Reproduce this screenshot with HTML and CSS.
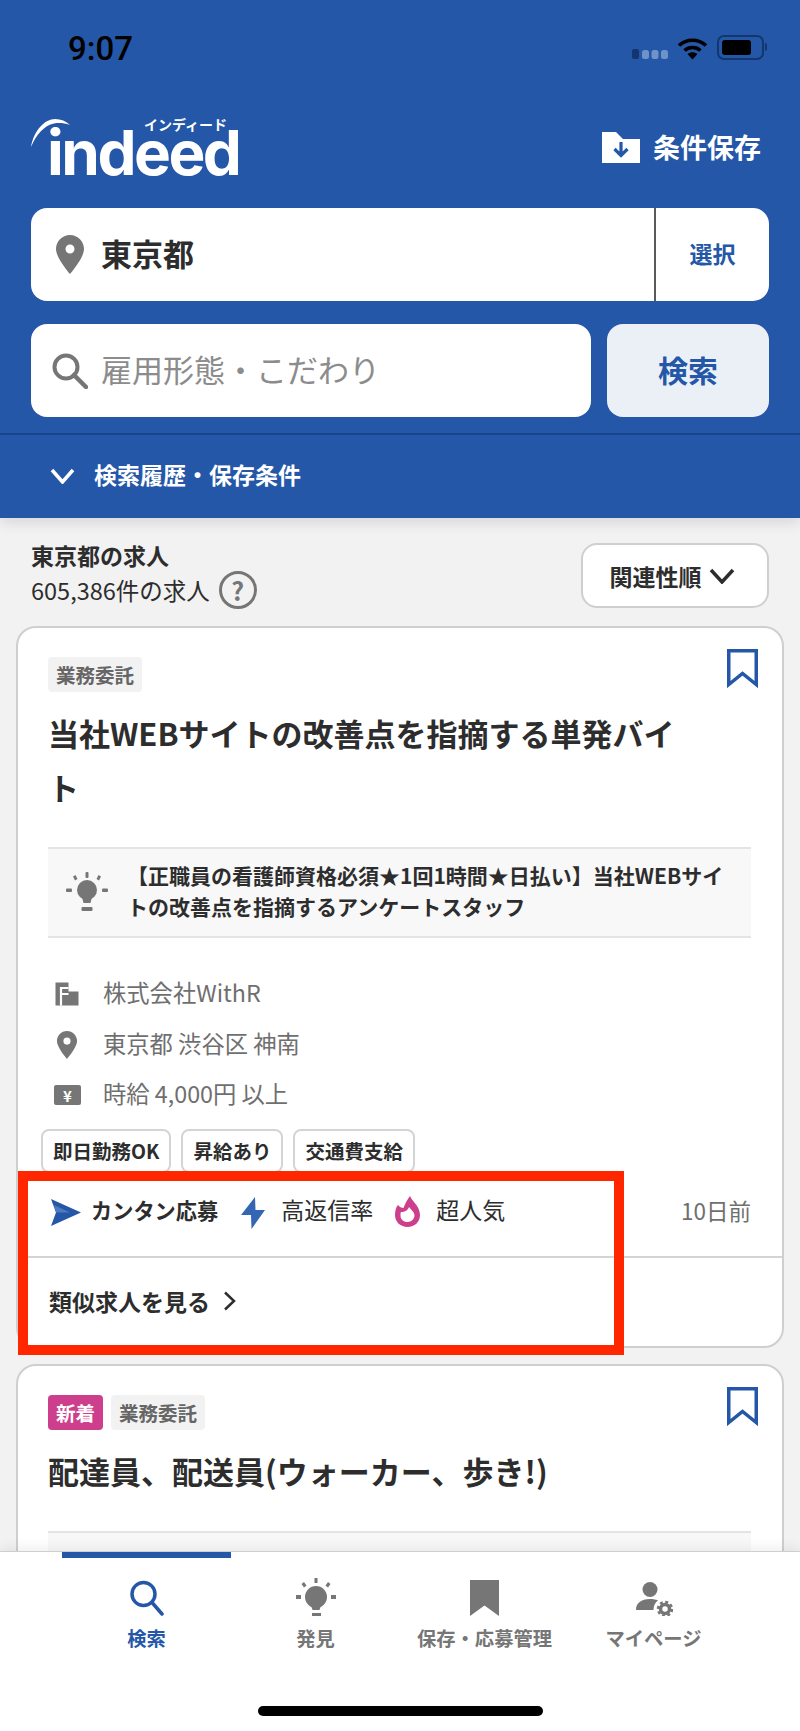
FILE: index.html
```html
<!DOCTYPE html>
<html lang="ja">
<head>
    <meta charset="UTF-8">
    <meta name="viewport" content="width=device-width, initial-scale=1.0">
    <title>Indeed 求人検索</title>
    <link rel="stylesheet" href="styles.css">
</head>
<body>
    <div class="app">
        <header class="top">
            <div class="status-bar">
                <span class="clock">9:07</span>
                <div class="status-icons">
                    <svg class="signal" width="36" height="10" viewBox="0 0 36 10">
                        <rect x="0" y="0" width="7" height="10" rx="2" fill="#14366e"/>
                        <rect x="10" y="1" width="7" height="9" rx="2.5" fill="#6f93c7"/>
                        <rect x="19.500" y="1" width="7" height="9" rx="2.500" fill="#6f93c7"/>
                        <rect x="29" y="1" width="7" height="9" rx="2.500" fill="#6f93c7"/>
                    </svg>
                    <svg class="wifi" width="31" height="24" viewBox="0 0 31 24">
                        <path d="M2 9.500C9.500 2.500 21.500 2.500 29 9.500" fill="none" stroke="#000" stroke-width="3.600"/>
                        <path d="M7.500 14.500C12 10.500 19 10.500 23.500 14.500" fill="none" stroke="#000" stroke-width="3.600"/>
                        <path d="M10.500 18L15.500 23.500L20.500 18C17.500 15.500 13.500 15.500 10.500 18Z"/>
                    </svg>
                    <div class="battery"><div class="battery-fill"></div></div>
                    <div class="battery-tip"></div>
                </div>
            </div>

            <div class="brand-row">
                <div class="logo">
                    <svg class="logo-arc" width="40" height="32" viewBox="0 0 40 32">
                        <path d="M0 31C3 14 14 3 24 3C30 3 35 5 39 9C33 7 28 6.500 23 7.500C13 9.500 5 19 0 31Z" fill="#fff"/>
                    </svg>
                    <span class="logo-kana">インディード</span>
                    <span class="logo-word">indeed</span>
                </div>
                <div class="save-search">
                    <svg width="38" height="31" viewBox="0 0 38 31">
                        <path d="M0 0H14L21 7H38V31H0Z" fill="#fff"/>
                        <path d="M19 10V23M12.500 17L19 23.500L25.500 17" fill="none" stroke="#2457a7" stroke-width="3.200"/>
                    </svg>
                    <span>条件保存</span>
                </div>
            </div>

            <div class="location-box">
                <div class="location-main">
                    <svg width="28" height="39" viewBox="0 0 28 39">
                        <path fill-rule="evenodd" d="M14 0C6 0 0 6.500 0 14C0 23 14 39 14 39S28 23 28 14C28 6.500 22 0 14 0ZM14 9.500A4.500 4.500 0 1 1 14 18.500A4.500 4.500 0 1 1 14 9.500Z" fill="#767676"/>
                    </svg>
                    <span>東京都</span>
                </div>
                <div class="location-select">選択</div>
            </div>

            <div class="search-row">
                <div class="keyword-box">
                    <svg width="36" height="36" viewBox="0 0 36 36">
                        <circle cx="14" cy="14" r="11.500" fill="none" stroke="#767676" stroke-width="4"/>
                        <path d="M22 22L34 34" stroke="#767676" stroke-width="4.500" stroke-linecap="round"/>
                    </svg>
                    <span>雇用形態・こだわり</span>
                </div>
                <div class="search-btn">検索</div>
            </div>

            <div class="history-row">
                <svg width="25" height="16" viewBox="0 0 25 16">
                    <path d="M2 2L12.500 14L23 2" fill="none" stroke="#fff" stroke-width="3.500"/>
                </svg>
                <span>検索履歴・保存条件</span>
            </div>
        </header>

        <main class="results">
            <div class="results-head">
                <div class="results-info">
                    <div class="results-title">東京都の求人</div>
                    <div class="results-count">
                        <span>605,386件の求人</span>
                        <span class="help-icon">?</span>
                    </div>
                </div>
                <div class="sort-btn">
                    <span>関連性順</span>
                    <svg width="26" height="16" viewBox="0 0 26 16">
                        <path d="M2 2L13 14L24 2" fill="none" stroke="#2d2d2d" stroke-width="3.500"/>
                    </svg>
                </div>
            </div>

            <article class="job-card">
                <svg class="bookmark" width="31" height="39" viewBox="0 0 31 39">
                    <path d="M1.750 1.750H29.250V35.500L15.500 24.500L1.750 35.500Z" fill="none" stroke="#2457a7" stroke-width="3.500"/>
                </svg>
                <div class="job-main">
                    <div class="badges"><span class="badge">業務委託</span></div>
                    <h2 class="job-title">当社WEBサイトの改善点を指摘する単発バイト</h2>
                    <div class="snippet">
                        <svg width="42" height="42" viewBox="0 0 42 42">
                            <g fill="#767676">
                                <circle cx="21" cy="18" r="10"/>
                                <path d="M16 25H26L24.500 31H17.500Z"/>
                                <rect x="15.500" y="35" width="11" height="4" rx="1"/>
                                <rect x="19.500" y="0" width="3" height="6" rx="1"/>
                                <rect x="0" y="16.500" width="6" height="3.500" rx="1"/>
                                <rect x="36" y="16.500" width="6" height="3.500" rx="1"/>
                                <path d="M7 4.500L9.500 3L11.500 7L9 8.500Z"/>
                                <path d="M35 4.500L32.500 3L30.500 7L33 8.500Z"/>
                            </g>
                        </svg>
                        <p>【正職員の看護師資格必須★1回1時間★日払い】当社WEBサイトの改善点を指摘するアンケートスタッフ</p>
                    </div>
                    <ul class="meta-list">
                        <li>
                            <svg width="26" height="26" viewBox="-1.500 -1.500 26 26">
                                <path d="M0 0H13V9H23V23H0Z" fill="#767676"/>
                                <path d="M5.500 23V5.500H13M5.500 11.500H13" fill="none" stroke="#fff" stroke-width="2.200"/>
                            </svg>
                            <span>株式会社WithR</span>
                        </li>
                        <li>
                            <svg width="26" height="28" viewBox="0 0 28 39">
                                <path fill-rule="evenodd" d="M14 0C6 0 0 6.500 0 14C0 23 14 39 14 39S28 23 28 14C28 6.500 22 0 14 0ZM14 9A5 5 0 1 1 14 19A5 5 0 1 1 14 9Z" fill="#767676"/>
                            </svg>
                            <span>東京都 渋谷区 神南</span>
                        </li>
                        <li>
                            <span class="yen-icon">¥</span>
                            <span>時給 4,000円 以上</span>
                        </li>
                    </ul>
                    <div class="tags">
                        <span class="tag">即日勤務OK</span>
                        <span class="tag">昇給あり</span>
                        <span class="tag">交通費支給</span>
                    </div>
                </div>
                <div class="job-perks">
                    <svg width="30" height="27" viewBox="0 0 30 27">
                        <path d="M0 0L30 13.500L0 27L5 13.500Z" fill="#2457a7"/>
                        <path d="M5 13.500L19 13.500L3 6Z" fill="#4f7bbd"/>
                    </svg>
                    <span class="perk-easy">カンタン応募</span>
                    <svg class="perk-icon" width="24" height="32" viewBox="0 0 24 32">
                        <path d="M14 0L0 18H10L10.500 32L24 13H14.500Z" fill="#3366b3"/>
                    </svg>
                    <span class="perk-text">高返信率</span>
                    <svg class="perk-icon perk-flame" width="25" height="31" viewBox="0 0 25 31">
                        <path fill-rule="evenodd" d="M15 0C16 4 25 10 25 19C25 26 19.500 31 12.500 31C5.500 31 0 26 0 19C0 15 1 11 3 9C4.500 11 6.500 12 8.500 12C10 8 12 4 15 0ZM14 11C13 14 10 16 6 16C5.500 17 5.500 18 5.500 19.500C5.500 23.500 8.500 26 12.500 26C16.500 26 19.500 23 19.500 19.500C19.500 16 16 14 14 11Z" fill="#cd3f8c"/>
                    </svg>
                    <span class="perk-text">超人気</span>
                    <span class="job-age">10日前</span>
                </div>
                <div class="job-foot">
                    <span>類似求人を見る</span>
                    <svg width="13" height="20" viewBox="0 0 13 20">
                        <path d="M2 1.500L11 10L2 18.500" fill="none" stroke="#2d2d2d" stroke-width="2.500"/>
                    </svg>
                </div>
            </article>

            <article class="job-card">
                <svg class="bookmark" width="31" height="39" viewBox="0 0 31 39">
                    <path d="M1.750 1.750H29.250V35.500L15.500 24.500L1.750 35.500Z" fill="none" stroke="#2457a7" stroke-width="3.500"/>
                </svg>
                <div class="job-main">
                    <div class="badges">
                        <span class="badge badge-new">新着</span>
                        <span class="badge">業務委託</span>
                    </div>
                    <h2 class="job-title">配達員、配送員(ウォーカー、歩き!)</h2>
                    <div class="snippet"></div>
                </div>
            </article>

            <!-- red marker drawn over the first card -->
            <div class="highlight"></div>
        </main>

        <nav class="tabbar">
            <div class="tabs">
                <div class="tab tab-active">
                    <div class="tab-icon">
                        <svg width="36" height="36" viewBox="0 0 36 36">
                            <circle cx="14.500" cy="14" r="11.500" fill="none" stroke="#2457a7" stroke-width="3.500"/>
                            <path d="M23 22.500L33 34" stroke="#2457a7" stroke-width="3.500" stroke-linecap="round"/>
                        </svg>
                    </div>
                    <span>検索</span>
                </div>
                <div class="tab">
                    <div class="tab-icon">
                        <svg width="40" height="40" viewBox="0 0 40 40">
                            <g fill="#767676">
                                <circle cx="20" cy="19" r="11"/>
                                <path d="M15 27H25L23.500 32H16.500Z"/>
                                <rect x="16" y="35" width="9" height="3"/>
                                <rect x="18.500" y="0" width="3" height="5"/>
                                <rect x="0" y="17" width="5" height="4"/>
                                <rect x="35" y="17" width="5" height="4"/>
                                <path d="M5.500 6L8 4L10.500 7.500L8 9.500Z"/>
                                <path d="M34.500 6L32 4L29.500 7.500L32 9.500Z"/>
                            </g>
                        </svg>
                    </div>
                    <span>発見</span>
                </div>
                <div class="tab">
                    <div class="tab-icon">
                        <svg width="29" height="36" viewBox="0 0 29 36">
                            <path d="M0 0H29V36L14.500 25.500L0 36Z" fill="#767676"/>
                        </svg>
                    </div>
                    <span>保存・応募管理</span>
                </div>
                <div class="tab">
                    <div class="tab-icon">
                        <svg width="38" height="36" viewBox="0 0 38 36">
                            <g fill="#767676">
                                <circle cx="15" cy="9.500" r="7.500"/>
                                <path d="M1 30C1 23 6 19 15 19C18 19 21 19.500 23 20.500C20 22.500 18.500 26 18.500 30Z"/>
                            </g>
                            <circle cx="30" cy="29" r="4.500" fill="none" stroke="#767676" stroke-width="3.500"/>
                            <circle cx="30" cy="29" r="7" fill="none" stroke="#767676" stroke-width="2.500" stroke-dasharray="3 2.500"/>
                        </svg>
                    </div>
                    <span>マイページ</span>
                </div>
            </div>
            <div class="home-bar"></div>
        </nav>
    </div>
</body>
</html>
```

FILE: styles.css
```css
/* Global styles */
* {
    box-sizing: border-box;
}

body {
    margin: 0;
    font-family: "Noto Sans CJK JP", "Noto Sans", sans-serif;
    color: #2d2d2d;
    background-color: #f2f2f2;
}

.app {
    width: 800px;
    height: 1731px;
    display: flex;
    flex-direction: column;
    overflow: hidden;
}

/* Blue header */
.top {
    height: 518px;
    flex-shrink: 0;
    background-color: #2457a7;
    position: relative;
    z-index: 2;
    box-shadow: 0 4px 14px rgba(0, 0, 0, 0.12);
}

.status-bar {
    height: 100px;
    padding: 31px 33px 0 68px;
    display: flex;
    justify-content: space-between;
    align-items: flex-start;
}

.clock {
    font-family: "Roboto", sans-serif;
    font-size: 33px;
    font-weight: 500;
    line-height: 36px;
    color: #000;
}

.status-icons {
    display: flex;
    align-items: flex-start;
    padding-top: 4px;
}

.signal {
    margin: 14px 9px 0 0;
}

.wifi {
    margin: 1px 9px 0 0;
}

.battery {
    width: 47px;
    height: 25px;
    padding: 3px;
    border: 2px solid #14366e;
    border-radius: 7px;
}

.battery-fill {
    width: 29px;
    height: 15px;
    background-color: #000;
    border-radius: 3px;
}

.battery-tip {
    width: 2px;
    height: 8px;
    margin: 8px 0 0 1px;
    background-color: #14366e;
    border-radius: 0 2px 2px 0;
}

.brand-row {
    height: 94px;
    margin-bottom: 14px;
    padding: 0 39px 0 31px;
    display: flex;
    justify-content: space-between;
    align-items: center;
}

.logo {
    position: relative;
    width: 210px;
    height: 62px;
}

.logo-arc {
    position: absolute;
    left: 0;
    top: 0;
}

.logo-kana {
    position: absolute;
    left: 113px;
    top: 1px;
    font-size: 14px;
    font-weight: 700;
    line-height: 14px;
    color: #fff;
    white-space: nowrap;
}

.logo-word {
    position: absolute;
    left: 16px;
    top: 16px;
    font-family: "Inter", sans-serif;
    font-size: 62px;
    font-weight: 700;
    line-height: 42px;
    letter-spacing: -2.500px;
    color: #fff;
}

.save-search {
    display: flex;
    align-items: center;
    gap: 13px;
    font-size: 27px;
    font-weight: 700;
    line-height: 36px;
    color: #fff;
}

.location-box {
    height: 93px;
    margin: 0 31px;
    display: flex;
    background-color: #fff;
    border-radius: 16px;
}

.location-main {
    flex: 1;
    padding-left: 25px;
    display: flex;
    align-items: center;
    gap: 17px;
    font-size: 31px;
    font-weight: 700;
}

.location-main span {
    padding-bottom: 4px;
}

.location-select {
    width: 115px;
    padding-bottom: 4px;
    border-left: 2px solid #5a5a5a;
    display: flex;
    justify-content: center;
    align-items: center;
    font-size: 23px;
    font-weight: 700;
    color: #2457a7;
}

.search-row {
    height: 93px;
    margin: 23px 31px 0;
    display: flex;
    gap: 16px;
}

.keyword-box {
    flex: 1;
    padding-left: 21px;
    display: flex;
    align-items: center;
    gap: 13px;
    background-color: #fff;
    border-radius: 16px;
    font-size: 31px;
    color: #8c8c8c;
}

.keyword-box span {
    padding-bottom: 4px;
}

.search-btn {
    width: 162px;
    padding-bottom: 4px;
    display: flex;
    justify-content: center;
    align-items: center;
    background-color: #ebf0f6;
    border-radius: 16px;
    font-size: 30px;
    font-weight: 700;
    color: #2457a7;
}

.history-row {
    height: 85px;
    margin-top: 16px;
    padding: 0 0 2px 50px;
    border-top: 2px solid #17448c;
    display: flex;
    align-items: center;
    gap: 19px;
    font-size: 23px;
    font-weight: 700;
    color: #fff;
}

.history-row span {
    padding-bottom: 4px;
}

/* Result list */
.results {
    flex: 1;
    min-height: 0;
    overflow: hidden;
    position: relative;
}

.results-head {
    padding: 22px 31px 16px;
    display: flex;
    justify-content: space-between;
}

.results-title {
    height: 30px;
    font-size: 23px;
    font-weight: 700;
    line-height: 30px;
}

.results-count {
    height: 40px;
    display: flex;
    align-items: center;
    gap: 9px;
    font-size: 23.500px;
    line-height: 40px;
}

.help-icon {
    width: 38px;
    height: 38px;
    border: 3px solid #767676;
    border-radius: 50%;
    display: flex;
    justify-content: center;
    align-items: center;
    font-size: 25px;
    font-weight: 700;
    line-height: 1;
    color: #767676;
}

.sort-btn {
    width: 188px;
    height: 65px;
    margin-top: 3px;
    padding-right: 6px;
    display: flex;
    justify-content: center;
    align-items: center;
    gap: 7px;
    background-color: #fff;
    border: 2px solid #cfcfcf;
    border-radius: 16px;
    font-size: 23px;
    font-weight: 700;
}

/* Job cards */
.job-card {
    position: relative;
    margin: 0 16px 16px;
    background-color: #fff;
    border: 2px solid #cfcfcf;
    border-radius: 20px;
}

.bookmark {
    position: absolute;
    top: 21px;
    right: 24px;
}

.job-main {
    padding: 29px 31px 0 30px;
}

.badges {
    display: flex;
    gap: 8px;
}

.badge {
    height: 35px;
    padding: 0 8px;
    background-color: #f2f2f2;
    border-radius: 4px;
    font-size: 19.500px;
    font-weight: 700;
    line-height: 35px;
    color: #666;
}

.badge-new {
    background-color: #cd3f8c;
    color: #fff;
}

.job-title {
    margin: 14px 0 33px;
    padding-right: 60px;
    font-size: 31px;
    font-weight: 700;
    line-height: 54px;
}

.snippet {
    height: 91px;
    padding: 0 20px 0 18px;
    display: flex;
    align-items: center;
    gap: 19px;
    background-color: #f8f8f8;
    border-top: 2px solid #e4e4e4;
    border-bottom: 2px solid #e4e4e4;
}

.snippet svg {
    flex-shrink: 0;
}

.snippet p {
    margin: 0;
    padding-bottom: 4px;
    font-size: 21px;
    font-weight: 700;
    line-height: 31px;
}

.meta-list {
    list-style: none;
    margin: 31px 0 0;
    padding: 0;
}

.meta-list li {
    height: 50.500px;
    display: flex;
    align-items: center;
    gap: 23px;
    padding-left: 6px;
    font-size: 23.300px;
    color: #6f6f6f;
}

.meta-list li span:last-child {
    padding-bottom: 4px;
}

.yen-icon {
    width: 27px;
    height: 20px;
    margin-right: -1px;
    background-color: #767676;
    border-radius: 2px;
    display: flex;
    justify-content: center;
    align-items: center;
    font-size: 15px;
    font-weight: 700;
    line-height: 1;
    color: #fff;
}

.tags {
    margin: 8px 0 0 -7px;
    display: flex;
    gap: 10px;
}

.tag {
    height: 44px;
    padding: 0 10px;
    border: 2px solid #d4d4d4;
    border-radius: 8px;
    font-size: 19.500px;
    font-weight: 700;
    line-height: 40px;
    white-space: nowrap;
}

.job-perks {
    height: 83px;
    padding: 0 31px 3px 33px;
    display: flex;
    align-items: center;
    font-size: 23px;
    line-height: 34px;
}

.job-perks svg {
    flex-shrink: 0;
}

.perk-easy {
    margin-left: 10px;
    padding-bottom: 6px;
    font-size: 21.200px;
    font-weight: 700;
}

.perk-icon {
    margin-left: 23px;
}

.perk-flame {
    margin-left: 22px;
    margin-bottom: 2px;
}

.perk-text {
    margin-left: 16px;
    padding-bottom: 8px;
}

.job-age {
    margin-left: auto;
    padding-bottom: 6px;
    font-size: 22.500px;
    color: #6f6f6f;
}

.job-foot {
    height: 90px;
    padding: 0 0 2px 31px;
    border-top: 2px solid #d4d4d4;
    display: flex;
    align-items: center;
    gap: 13px;
    font-size: 23px;
    font-weight: 700;
}

.highlight {
    position: absolute;
    left: 18px;
    top: 653px;
    width: 606px;
    height: 184px;
    border: 10px solid #ff2600;
}

/* Bottom navigation */
.tabbar {
    height: 180px;
    flex-shrink: 0;
    position: relative;
    z-index: 2;
    background-color: #fff;
    border-top: 1px solid #cfcfcf;
    box-shadow: 0 -3px 12px rgba(0, 0, 0, 0.07);
}

.tabs {
    height: 154px;
    padding: 0 62px;
    display: grid;
    grid-template-columns: repeat(4, 169px);
}

.tab {
    position: relative;
    height: 104px;
    padding-top: 26px;
    display: flex;
    flex-direction: column;
    align-items: center;
    font-size: 19.300px;
    font-weight: 700;
    line-height: 28px;
    color: #767676;
    white-space: nowrap;
}

.tab-icon {
    height: 40px;
    margin-bottom: 6px;
    display: flex;
    align-items: center;
}

.tab-active {
    color: #2457a7;
}

.tab-active::before {
    content: "";
    position: absolute;
    top: 0;
    left: 0;
    right: 0;
    height: 6px;
    background-color: #2457a7;
}

.home-bar {
    width: 285px;
    height: 10px;
    margin: 0 auto;
    background-color: #000;
    border-radius: 5px;
}
```
